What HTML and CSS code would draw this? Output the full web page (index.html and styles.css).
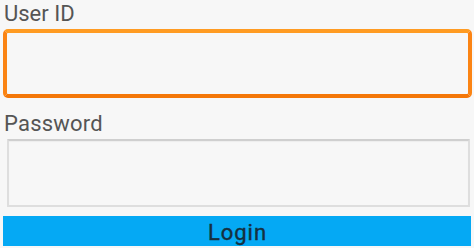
FILE: index.html
```html
<!DOCTYPE html>
<html>
<head>
<meta charset="utf-8">
<link rel="stylesheet" href="styles.css">
</head>
<body>
<form class="login">
  <label class="label" for="uid">User ID</label>
  <input id="uid" class="field field-focus" type="text">
  <label class="label label-pass" for="pwd">Password</label>
  <input id="pwd" class="field field-pass" type="password">
  <button type="button" class="btn">Login</button>
</form>
</body>
</html>
```
FILE: styles.css
```css
html, body {
  margin: 0;
  padding: 0;
  background: #f7f7f7;
}
.login {
  display: flex;
  flex-direction: column;
  padding: 2px 2px 0 3px;
  width: 469px;
  font-family: Roboto, "Liberation Sans", sans-serif;
}
.label {
  display: block;
  font-size: 22px;
  line-height: 24px;
  color: #555555;
  padding-left: 1px;
}
.field {
  box-sizing: border-box;
  display: block;
  margin: 0;
  outline: none;
  background: #f7f7f7;
}
.field-focus {
  margin-top: 3px;
  width: 469px;
  height: 69px;
  border: 4px solid #fb8414;
  border-top-color: #ff9b22;
  border-bottom-color: #f47708;
  border-radius: 5px;
}
.label-pass {
  margin-top: 14px;
  letter-spacing: 0.2px;
}
.field-pass {
  margin-top: 3px;
  margin-left: 4px;
  width: 463px;
  height: 68px;
  border: 2px solid #dedede;
  border-top-color: #cfcfcf;
  border-radius: 1px;
  box-shadow: inset 0 1px 1px rgba(0,0,0,0.04);
}
.btn {
  box-sizing: border-box;
  margin-top: 9px;
  width: 468px;
  height: 30px;
  border: none;
  border-radius: 0;
  background: #05a9f4;
  color: #15303f;
  font-family: Roboto, "Liberation Sans", sans-serif;
  font-size: 22px;
  font-weight: normal;
  -webkit-text-stroke: 0.4px #15303f;
  letter-spacing: 1px;
  line-height: 27px;
  padding: 3px 0 0 1px;
  text-align: center;
}
```
